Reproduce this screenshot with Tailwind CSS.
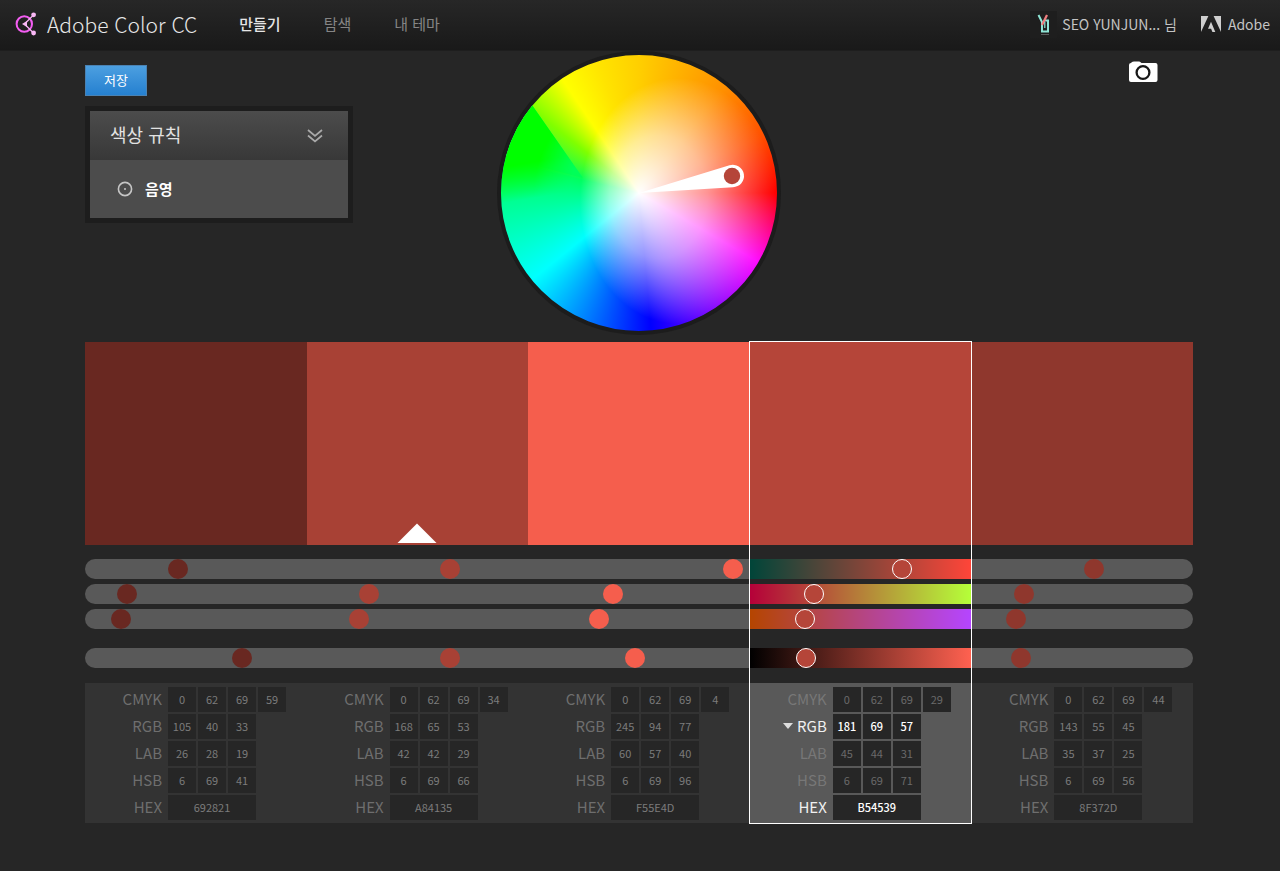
<!DOCTYPE html>
<html lang="ko">
<head>
<meta charset="utf-8">
<meta name="viewport" content="width=device-width, initial-scale=1">
<title>Adobe Color CC</title>
<script src="https://cdn.jsdelivr.net/npm/@tailwindcss/browser@4"></script>
</head>
<body class="min-h-screen bg-[#262626] font-['Noto_Sans_CJK_KR',sans-serif] text-[#ddd]">

<header class="flex h-[51px] items-center border-b border-[#1e1e1e] bg-linear-to-b/srgb from-[#272727] to-[#191919] pr-[10px] pb-[2px] pl-[15px]">
  <a href="#" class="flex items-center gap-2">
    <svg class="h-7 w-6" viewBox="0 0 24 28" fill="none" aria-hidden="true">
      <circle cx="9.3" cy="14" r="7.7" stroke="#f45df2" stroke-width="2"/>
      <path d="M18.500 5 9.500 14l9 9" stroke="#f9b0f5" stroke-width="1.300"/>
      <path d="M7 14 12 11v6z" fill="#f9b8f5"/>
      <circle cx="18.600" cy="4.800" r="2.400" fill="#f9b8f5"/>
      <circle cx="18.600" cy="23" r="2.400" fill="#f9b8f5"/>
    </svg>
    <span class="text-[21px] leading-8 font-light whitespace-nowrap text-[#e8e8e8]">Adobe Color CC</span>
  </a>
  <nav class="ml-[42px] flex gap-[43px] text-[15px] leading-6 whitespace-nowrap text-[#858585]">
    <a href="#" class="font-medium text-[#e6e6e6]">만들기</a>
    <a href="#">탐색</a>
    <a href="#">내 테마</a>
  </nav>
  <div class="ml-auto flex items-center text-sm leading-6 whitespace-nowrap text-[#c4c4c4]">
    <a href="#" class="flex items-center gap-[5px]">
      <svg class="h-[27px] w-[27px]" viewBox="0 0 27 27" fill="none" aria-hidden="true">
        <path d="M0 0h27v27H0z" fill="#1e1e1e"/>
        <path d="M8.500 4 12 11V20.500h6V9.500h-4" stroke="#8fe6d6" stroke-width="2"/>
        <path d="M17 4 12 14" stroke="#f07f80" stroke-width="2.200"/>
        <path d="M14.800 11v6" stroke="#8fe6d6" stroke-width="1.200"/>
        <path d="M11 23.500h8" stroke="#777" stroke-width=".7"/>
      </svg>
      <span>SEO YUNJUN... 님</span>
    </a>
    <a href="#" class="ml-6 flex items-center gap-[7px]">
      <svg class="h-4 w-5" viewBox="0 0 20 16" fill="#cfcfcf" aria-hidden="true">
        <path d="M0 0h7.400L0 16zM12.600 0H20v16zM10 5.800 14.300 16h-2.900l-1.300-3.200H7z"/>
      </svg>
      <span>Adobe</span>
    </a>
  </div>
</header>

<main class="pr-[87px] pl-[85px]">
  <section class="grid grid-cols-[1fr_284px_1fr] items-start">
    <div class="pt-[14px]">
      <button class="block h-[31px] w-[62px] border border-[#4a82b3] bg-linear-to-b/srgb from-[#4c9fe0] to-[#2580d0] pb-[2px] text-[13px] leading-5 text-white">저장</button>
      <div class="mt-[10px] w-[268px] border-5 border-[#1d1d1d] bg-[#4c4c4c]">
        <button class="flex h-[49px] w-full items-center justify-between bg-linear-to-b/srgb from-[#4c4c4c] to-[#383838] pr-[25px] pb-[3px] pl-5 text-lg leading-7 text-[#e2e2e2]">
          <span>색상 규칙</span>
          <svg class="mt-[3px] h-[14px] w-4" viewBox="0 0 16 14" fill="none" stroke="#aaa" stroke-width="1.700" aria-hidden="true"><path d="m1 1 7 6 7-6M1 6.500l7 6 7-6"/></svg>
        </button>
        <div class="flex h-[58px] items-center gap-3 pl-[27px] text-[15px] leading-6 font-bold text-white">
          <svg class="h-4 w-4" viewBox="0 0 16 16" aria-hidden="true"><circle cx="8" cy="8" r="6.600" fill="none" stroke="#c6c6c6" stroke-width="1.600"/><circle cx="8" cy="8" r="1" fill="#c6c6c6"/></svg>
          <span>음영</span>
        </div>
      </div>
    </div>

    <div class="aspect-square w-full rounded-full border-4 border-[#1c1c1c] bg-[conic-gradient(#ffcf00_0deg,#ff9000_39deg,#ff5000_65deg,#ff0000_90deg,#ff00ff_120deg,#0000ff_175deg,#00ffff_231deg,#00ff60_283deg,#10ff50_286deg,#80ff00_308deg,#ffff00_326deg,#ffe400_343deg,#ffcf00_360deg)] bg-origin-border">
      <svg class="block w-full rounded-full" viewBox="0 0 276 276" role="img" aria-label="색상환">
        <defs>
          <radialGradient id="white" gradientUnits="userSpaceOnUse" cx="0" cy="0" r="123" fx="-49" fy="-8" gradientTransform="translate(177 146) scale(.797 1)">
            <stop offset="0" stop-color="#fff"/>
            <stop offset=".5" stop-color="#fff" stop-opacity=".58"/>
            <stop offset="1" stop-color="#fff" stop-opacity="0"/>
          </radialGradient>
          <radialGradient id="green" gradientUnits="userSpaceOnUse" cx="138" cy="138" r="138">
            <stop offset=".5" stop-color="#0f0" stop-opacity="0"/>
            <stop offset=".76" stop-color="#0f0"/>
          </radialGradient>
          <linearGradient id="fade" gradientUnits="userSpaceOnUse" x1="20" y1="145" x2="14" y2="110">
            <stop offset="0" stop-color="#000"/>
            <stop offset="1" stop-color="#fff"/>
          </linearGradient>
          <mask id="sector"><path d="M138 138 0 150V0l31 50 51 73z" fill="url(#fade)"/></mask>
        </defs>
        <path d="M82 123 31 50 0 0v101z" fill="#00ff58"/>
        <circle cx="138" cy="138" r="138" fill="url(#green)" mask="url(#sector)"/>
        <circle cx="138" cy="138" r="138" fill="url(#white)"/>
        <path d="M138 138 228.500 110.300a11.200 11.200 0 1 1 3.500 21.900z" fill="#fff"/>
        <circle cx="231" cy="121" r="8.200" fill="#b54539"/>
      </svg>
    </div>

    <button class="mt-[10px] mr-[35px] justify-self-end" aria-label="이미지에서 만들기">
      <svg class="h-[22px] w-[30px]" viewBox="0 0 30 22" aria-hidden="true">
        <path d="M1 4q0-2 2-2l1-1q.5-.6 2-.6h5q1 0 1.600.8L13.500 2H27.500q2 0 2 2v15q0 2-2 2H3q-2 0-2-2z" fill="#fff"/>
        <circle cx="15" cy="11.500" r="6.400" fill="#fff" stroke="#181818" stroke-width="2.300"/>
      </svg>
    </button>
  </section>

  <section id="palette" class="mt-[7px] grid grid-cols-5"></section>
</main>

<script>
const grey = ['bg-[#595959]', 'bg-[#595959]', 'bg-[#595959]', 'bg-[#595959]'];
const ramps = [
  'bg-linear-to-r/srgb from-[#004539] to-[#ff4539]',
  'bg-linear-to-r/srgb from-[#b50039] to-[#b5ff39]',
  'bg-linear-to-r/srgb from-[#b54500] to-[#b545ff]',
  'bg-linear-to-r/srgb from-[#000000] to-[#ff6150]'
];
const colors = [
  { hex: '692821', pos: [414, 159, 129, 729], cmyk: [0, 62, 69, 59], rgb: [105, 40, 33], lab: [26, 28, 19], hsb: [6, 69, 41] },
  { hex: 'A84135', pos: [662, 260, 210, 662], cmyk: [0, 62, 69, 34], rgb: [168, 65, 53], lab: [42, 42, 29], hsb: [6, 69, 66], base: true },
  { hex: 'F55E4D', pos: [964, 371, 302, 480], cmyk: [0, 62, 69, 4], rgb: [245, 94, 77], lab: [60, 57, 40], hsb: [6, 69, 96] },
  { hex: 'B54539', pos: [705, 269, 224, 229], cmyk: [0, 62, 69, 29], rgb: [181, 69, 57], lab: [45, 44, 31], hsb: [6, 69, 71], active: true },
  { hex: '8F372D', pos: [558, 211, 174, 196], cmyk: [0, 62, 69, 44], rgb: [143, 55, 45], lab: [35, 37, 25], hsb: [6, 69, 56] }
];
const sliderNames = ['R', 'G', 'B', '밝기'];

function slider(c, i, n) {
  const track = (c.active ? ramps : grey)[n];
  const round = i === 0 ? 'rounded-l-full' : i === 4 ? 'rounded-r-full' : '';
  const ring = c.active ? '[&::-webkit-slider-thumb]:border [&::-webkit-slider-thumb]:border-solid [&::-webkit-slider-thumb]:border-white' : '';
  const gap = n === 3 ? 'mt-[19px]' : n ? 'mt-[5px]' : 'mt-[14px]';
  return `<input type="range" min="0" max="1000" value="${c.pos[n]}" aria-label="${c.hex} ${sliderNames[n]}"
    class="block h-5 w-full appearance-none ${track} ${round} ${gap} [&::-webkit-slider-thumb]:h-5 [&::-webkit-slider-thumb]:w-5 [&::-webkit-slider-thumb]:appearance-none [&::-webkit-slider-thumb]:rounded-full [&::-webkit-slider-thumb]:bg-(--swatch) ${ring}">`;
}

function row(c, name, values) {
  const lit = c.active && (name === 'RGB' || name === 'HEX');
  const label = lit ? 'text-[#f0f0f0]' : c.active ? 'text-[#777777]' : 'text-[#6e6e6e]';
  const field = lit ? 'text-white font-medium' : c.active ? 'text-[#6a6a6a]' : 'text-[#7c7c7c]';
  const width = name === 'HEX' ? 'w-[88px]' : 'w-7';
  const arrow = lit && name === 'RGB'
    ? '<svg class="mr-1 h-[6px] w-[10px]" viewBox="0 0 10 6" fill="#ddd" aria-hidden="true"><path d="M0 0h10L5 6z"/></svg>' : '';
  const id = name + c.hex;
  return `<div class="flex items-center gap-[2px]">
    <label for="${id}" class="mr-1 flex h-[25px] w-[77px] items-center justify-end pb-[2px] text-[15px] leading-[23px] ${label}">${arrow}${name}</label>
    ${values.map((v, k) => `<input type="text" value="${v}" ${k ? `aria-label="${name} ${k + 1}"` : `id="${id}"`} class="h-[25px] ${width} bg-[#262626] px-0 pt-0 pb-[2px] text-center text-[11px] leading-4 ${field}">`).join('')}
  </div>`;
}

document.getElementById('palette').innerHTML = colors.map((c, i) => `
  <div class="${c.active ? 'relative outline outline-white' : ''}" style="--swatch:#${c.hex}">
    <div class="flex h-[203px] items-end justify-center bg-(--swatch) pb-[2px]">
      ${c.base ? '<svg class="h-5 w-10" viewBox="0 0 40 20" fill="#fff" aria-hidden="true"><path d="M20 .5 39.500 20H.5z"/></svg>' : ''}
    </div>
    ${[0, 1, 2, 3].map(n => slider(c, i, n)).join('')}
    <div class="mt-[15px] flex flex-col gap-[2px] pt-1 pb-[3px] ${c.active ? 'bg-[#595959]' : 'bg-[#333333]'}">
      ${row(c, 'CMYK', c.cmyk)}${row(c, 'RGB', c.rgb)}${row(c, 'LAB', c.lab)}${row(c, 'HSB', c.hsb)}${row(c, 'HEX', [c.hex])}
    </div>
  </div>`).join('');
</script>
</body>
</html>
